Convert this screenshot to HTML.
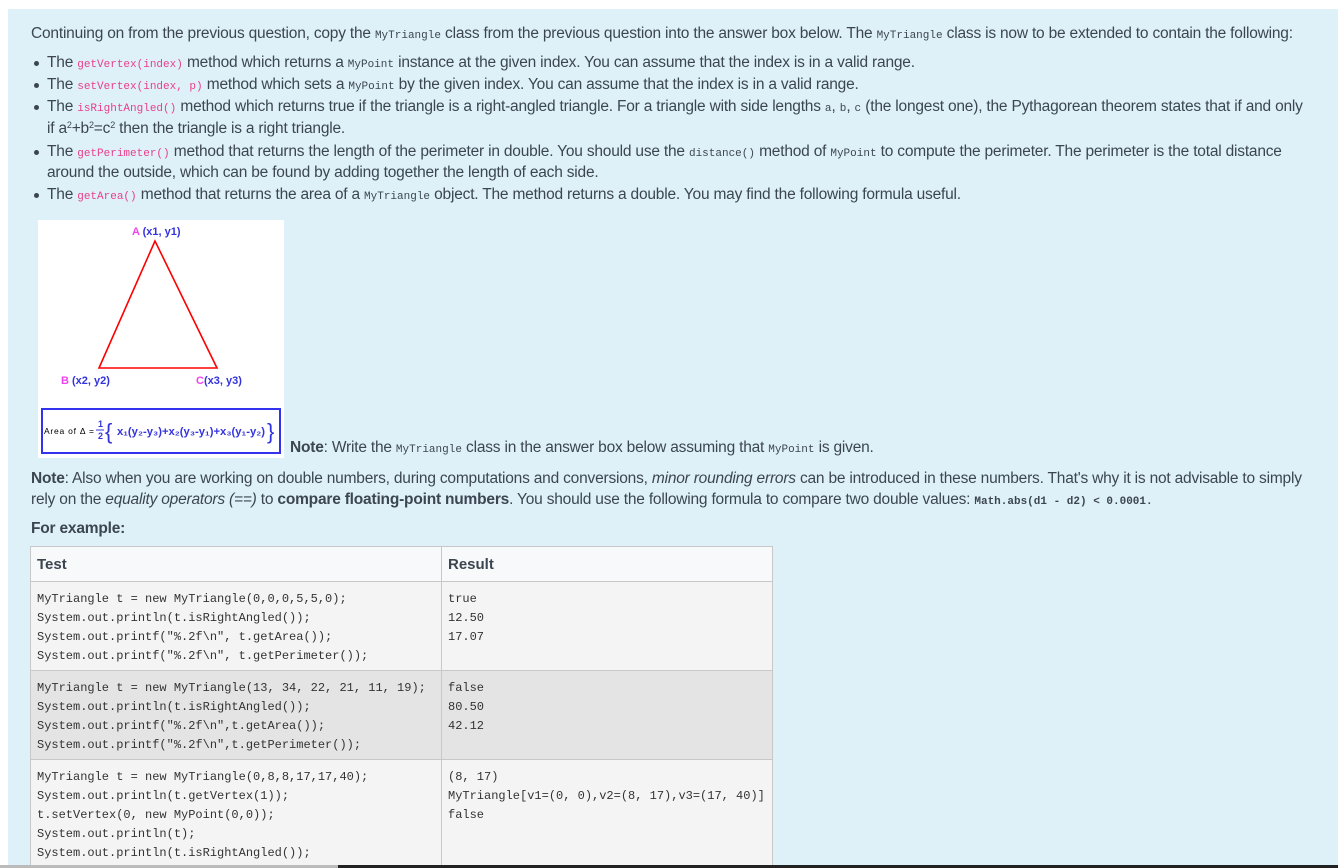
<!DOCTYPE html>
<html><head><meta charset="utf-8"><style>
*{margin:0;padding:0;box-sizing:border-box}
body{width:1338px;height:868px;overflow:hidden;background:#fff;font-family:"Liberation Sans",sans-serif;color:#3b4651;font-size:15.5px;position:relative}
.panel{position:absolute;left:8px;top:9px;width:1330px;height:859px;background:#dff1f8}
.l{position:absolute;white-space:nowrap;line-height:18px;letter-spacing:-0.2px;margin-top:2px}
code,.c{font-family:"Liberation Mono",monospace;font-size:11px;letter-spacing:0}
.r{color:#e83e8c}
.b{position:absolute;left:34px;width:5px;height:5px;border-radius:50%;background:#3b4651;margin-top:2px}
sup{font-size:9px;vertical-align:5px;line-height:0}
table{position:absolute;left:30px;top:546px;width:743px;border-collapse:collapse;font-family:"Liberation Mono",monospace;font-size:12px;color:#333}
td,th{border:1px solid #c8c8c8;vertical-align:top;text-align:left;padding:0 6px}
th{height:35px;background:#f8f9fb;font-family:"Liberation Sans",sans-serif;font-size:15px;font-weight:bold;color:#3b4651;vertical-align:middle}
td{line-height:19px;padding-top:8px;padding-bottom:4px;white-space:pre}
tr.a td{background:#f4f4f4}
tr.g td{background:#e4e4e4}
</style></head><body>
<div class="panel"></div>
<div class="l" style="left:31px;top:23px">Continuing on from the previous question, copy the <code>MyTriangle</code> class from the previous question into the answer box below. The <code>MyTriangle</code> class is now to be extended to contain the following:</div>
<div class="b" style="top:59px"></div>
<div class="l" style="left:47px;top:52px">The <code class="r">getVertex(index)</code> method which returns a <code>MyPoint</code> instance at the given index. You can assume that the index is in a valid range.</div>
<div class="b" style="top:81px"></div>
<div class="l" style="left:47px;top:74px">The <code class="r">setVertex(index, p)</code> method which sets a <code>MyPoint</code> by the given index. You can assume that the index is in a valid range.</div>
<div class="b" style="top:103px"></div>
<div class="l" style="left:47px;top:96px">The <code class="r">isRightAngled()</code> method which returns true if the triangle is a right-angled triangle. For a triangle with side lengths <code>a</code>, <code>b</code>, <code>c</code> (the longest one), the Pythagorean theorem states that if and only</div>
<div class="l" style="left:47px;top:118px">if a<sup>2</sup>+b<sup>2</sup>=c<sup>2</sup> then the triangle is a right triangle.</div>
<div class="b" style="top:148px"></div>
<div class="l" style="left:47px;top:141px">The <code class="r">getPerimeter()</code> method that returns the length of the perimeter in double. You should use the <code>distance()</code> method of <code>MyPoint</code> to compute the perimeter. The perimeter is the total distance</div>
<div class="l" style="left:47px;top:162px">around the outside, which can be found by adding together the length of each side.</div>
<div class="b" style="top:191px"></div>
<div class="l" style="left:47px;top:184px">The <code class="r">getArea()</code> method that returns the area of a <code>MyTriangle</code> object. The method returns a double. You may find the following formula useful.</div>

<svg style="position:absolute;left:38px;top:220px" width="246" height="238" viewBox="0 0 246 238">
<rect width="246" height="238" fill="#fff"/>
<polygon points="117,21 61,148 179,148" fill="none" stroke="#f00" stroke-width="1.6"/>
<text x="94" y="15" font-family="Liberation Sans" font-size="11" font-weight="bold" fill="#3333dd"><tspan fill="#ee44ee">A</tspan> (x1, y1)</text>
<text x="23" y="164" font-family="Liberation Sans" font-size="11" font-weight="bold" fill="#3333dd"><tspan fill="#ee44ee">B</tspan> (x2, y2)</text>
<text x="158" y="164" font-family="Liberation Sans" font-size="11" font-weight="bold" fill="#3333dd"><tspan fill="#ee44ee">C</tspan>(x3, y3)</text>
<rect x="4" y="189" width="238" height="44" fill="none" stroke="#3333ee" stroke-width="2"/>
<text x="6" y="214" font-family="Liberation Sans" font-size="8.5" fill="#000" textLength="50">Area of Δ =</text>
<text x="60" y="207" font-family="Liberation Sans" font-size="9" font-weight="bold" fill="#3333dd">1</text>
<line x1="58" y1="210" x2="66" y2="210" stroke="#3333dd"/>
<text x="60" y="219" font-family="Liberation Sans" font-size="9" font-weight="bold" fill="#3333dd">2</text>
<text x="67" y="219" font-family="Liberation Sans" font-size="22" fill="#3333dd">{</text>
<text x="79" y="215" font-family="Liberation Sans" font-size="11" font-weight="bold" fill="#3333dd" textLength="148" lengthAdjust="spacingAndGlyphs">x₁(y₂-y₃)+x₂(y₃-y₁)+x₃(y₁-y₂)</text>
<text x="229" y="219" font-family="Liberation Sans" font-size="22" fill="#3333dd">}</text>
</svg>
<div class="l" style="left:290px;top:437px"><b>Note</b>: Write the <code>MyTriangle</code> class in the answer box below assuming that <code>MyPoint</code> is given.</div>
<div class="l" style="left:31px;top:468px"><b>Note</b>: Also when you are working on double numbers, during computations and conversions, <i>minor rounding errors</i> can be introduced in these numbers. That's why it is not advisable to simply</div>
<div class="l" style="left:31px;top:489px">rely on the <i>equality operators (==)</i> to <b>compare floating-point numbers</b>. You should use the following formula to compare two double values: <code style="font-weight:bold">Math.abs(d1 - d2) &lt; 0.0001.</code></div>
<div class="l" style="left:31px;top:518px;font-weight:bold">For example:</div>
<table>
<tr><th style="width:411px">Test</th><th>Result</th></tr>
<tr class="a"><td>MyTriangle t = new MyTriangle(0,0,0,5,5,0);
System.out.println(t.isRightAngled());
System.out.printf("%.2f\n", t.getArea());
System.out.printf("%.2f\n", t.getPerimeter());</td><td>true
12.50
17.07</td></tr>
<tr class="g"><td>MyTriangle t = new MyTriangle(13, 34, 22, 21, 11, 19);
System.out.println(t.isRightAngled());
System.out.printf("%.2f\n",t.getArea());
System.out.printf("%.2f\n",t.getPerimeter());</td><td>false
80.50
42.12</td></tr>
<tr class="a"><td>MyTriangle t = new MyTriangle(0,8,8,17,17,40);
System.out.println(t.getVertex(1));
t.setVertex(0, new MyPoint(0,0));
System.out.println(t);
System.out.println(t.isRightAngled());</td><td>(8, 17)
MyTriangle[v1=(0, 0),v2=(8, 17),v3=(17, 40)]
false</td></tr>
</table>
<div style="position:absolute;left:0;top:865px;width:338px;height:3px;background:#bbb"></div>
<div style="position:absolute;left:338px;top:865px;width:1000px;height:3px;background:#222"></div>
</body></html>
